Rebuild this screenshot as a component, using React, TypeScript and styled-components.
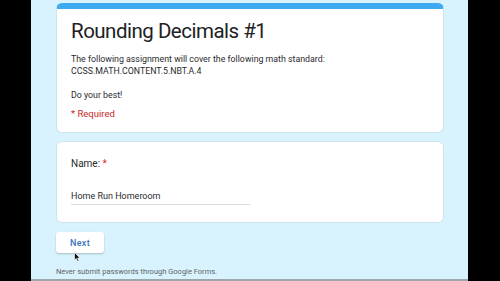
import React from 'react';
import styled, { createGlobalStyle } from 'styled-components';

const GlobalStyle = createGlobalStyle`
  html, body {
    margin: 0;
    padding: 0;
    background: #000;
  }
  body {
    font-family: Roboto, "Liberation Sans", Arial, sans-serif;
  }
`;

function App() {
  return (
    <Frame>
      <GlobalStyle />
      <SideBar width={31} />
      <Main>
        <HeaderCard>
          <Title>Rounding Decimals #1</Title>
          <Description>
            The following assignment will cover the following math standard:
            <br />
            CCSS.MATH.CONTENT.5.NBT.A.4
          </Description>
          <Description>Do your best!</Description>
          <RequiredNote>* Required</RequiredNote>
        </HeaderCard>
        <QuestionCard>
          <QuestionLabel>
            Name: <Star>*</Star>
          </QuestionLabel>
          <AnswerField>Home Run Homeroom</AnswerField>
        </QuestionCard>
        <ButtonRow>
          <NextButton>Next</NextButton>
          <Cursor width="7" height="10" viewBox="0 0 7 10">
            <path d="M0.5 0.5 L0.5 8 L2.3 6.4 L3.6 9.3 L4.8 8.8 L3.6 6 L6 6 Z" fill="#111" stroke="#fff" strokeWidth="0.6" />
          </Cursor>
        </ButtonRow>
        <Footer>Never submit passwords through Google Forms.</Footer>
      </Main>
      <SideBar width={32} />
    </Frame>
  );
}

export default App;

const Frame = styled.div`
  display: flex;
  width: 500px;
  height: 281px;
  overflow: hidden;
`;

const SideBar = styled.div<{ width: number }>`
  width: ${({ width }) => width}px;
  flex-shrink: 0;
  background: #000;
`;

const Main = styled.div`
  flex: 1;
  background: #d8f3fd;
  border-bottom: 2px solid #9aa8ad;
  box-sizing: border-box;
  padding: 3px 24px 0 25px;
  display: flex;
  flex-direction: column;
`;

const Card = styled.div`
  background: #fff;
  border-radius: 6px;
  border: 1px solid #cfe3ec;
  box-sizing: border-box;
  padding: 0 14px;
`;

const HeaderCard = styled(Card)`
  height: 130px;
  border-top: 6px solid #3fa9f2;
  padding-top: 10px;
`;

const Title = styled.h1`
  margin: 0;
  font-size: 20.5px;
  line-height: 24px;
  letter-spacing: -0.5px;
  font-weight: 400;
  color: #202124;
`;

const Description = styled.p`
  margin: 10px 0 0;
  font-size: 8.8px;
  line-height: 12px;
  color: #2a2b2e;
  & + & {
    margin-top: 12px;
  }
`;

const RequiredNote = styled.div`
  margin-top: 7px;
  font-size: 9.5px;
  line-height: 12px;
  color: #c62828;
`;

const QuestionCard = styled(Card)`
  margin-top: 8px;
  height: 82px;
  padding-top: 15px;
`;

const QuestionLabel = styled.div`
  font-size: 10px;
  line-height: 13px;
  color: #2a2b2e;
`;

const Star = styled.span`
  color: #d93025;
`;

const AnswerField = styled.div`
  margin-top: 20px;
  width: 179px;
  font-size: 9px;
  line-height: 12px;
  padding-bottom: 2px;
  color: #2a2b2e;
  border-bottom: 1px solid #dadce0;
`;

const ButtonRow = styled.div`
  position: relative;
  margin-top: 9px;
  display: flex;
`;

const NextButton = styled.button`
  width: 48px;
  height: 21px;
  border: none;
  border-radius: 3px;
  background: #fff;
  box-shadow: 0 1px 2px rgba(60, 64, 67, 0.3);
  color: #3a72b8;
  font-family: Roboto, "Liberation Sans", Arial, sans-serif;
  font-size: 9px;
  font-weight: 500;
  letter-spacing: 0.3px;
  padding: 0;
`;

const Cursor = styled.svg`
  position: absolute;
  left: 18px;
  top: 20px;
`;

const Footer = styled.div`
  margin-top: 14px;
  font-size: 7.5px;
  line-height: 10px;
  color: #5f6368;
`;
